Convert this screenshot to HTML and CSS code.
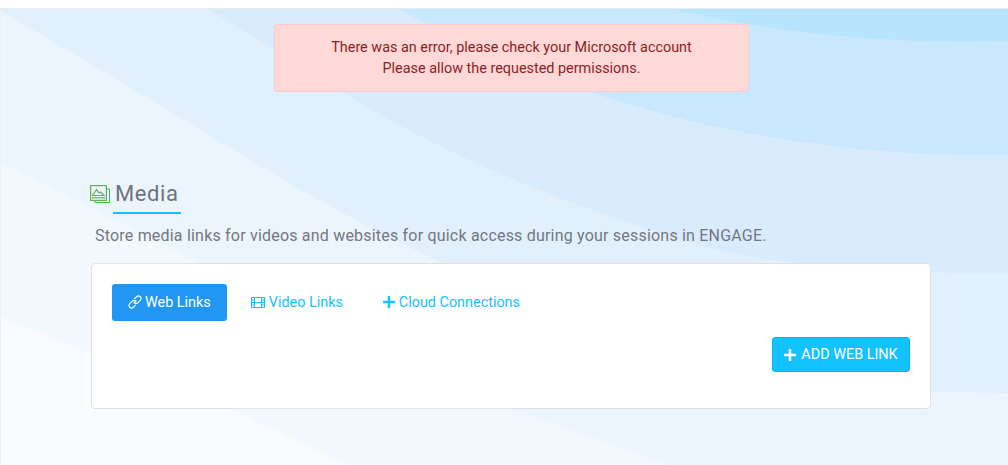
FILE: index.html
```html
<!DOCTYPE html>
<html lang="en">
<head>
<meta charset="utf-8">
<title>Media</title>
<link rel="stylesheet" href="styles.css">
</head>
<body>
<header class="topbar"></header>
<main class="stage">
  <svg class="waves" viewBox="0 9 1008 456" preserveAspectRatio="none" aria-hidden="true">
    <rect y="9" width="1008" height="456" fill="#f8fbff"/>
    <path d="M0 317L90 353L227 408L300 443L350 465H1008V0H0Z" fill="#f3f8ff"/>
    <path d="M0 163L193 260C300 312 420 366 508 408L670 465H1008V0H0Z" fill="#ecf4fe"/>
    <path d="M0 11L100 70L300 190L368 227L435 260C600 340 780 385 932 392L1008 393V0H0Z" fill="#e2f0fe"/>
    <path d="M207 9L273 49L338 90C430 148 560 205 706 247C790 268 900 274 1008 273V0H207Z" fill="#d9ecfd"/>
    <path d="M397 9L425 23C480 55 530 72 584 90C700 130 850 158 1008 155V0H397Z" fill="#c9e8fe"/>
    <path d="M673 9C740 25 860 46 1008 41V0H673Z" fill="#b7e5fe"/>
  </svg>
  <div class="content">
    <div class="alert">
      <p>There was an error, please check your Microsoft account</p>
      <p>Please allow the requested permissions.</p>
    </div>
    <section class="media">
      <div class="heading">
        <svg class="media-icon" viewBox="0 0 20 18" aria-hidden="true">
          <path d="M5 15.5V17.5H19.5V4H17" fill="none" stroke="#45bb4a" stroke-width="1"/>
          <rect x="0.6" y="0.6" width="15.8" height="14.8" fill="none" stroke="#6cb04c" stroke-width="1.2"/>
          <path d="M2.5 10.5L6.5 4.5L9 8L10.5 7L14 10.5Z" fill="none" stroke="#6cb04c" stroke-width="1.2"/>
          <path d="M2 12.8H15" stroke="#6cb04c" stroke-width="1.2"/>
        </svg>
        <h1 class="title">Media</h1>
      </div>
      <p class="lead">Store media links for videos and websites for quick access during your sessions in ENGAGE.</p>
      <div class="card">
        <nav class="tabs">
          <a class="tab tab-active">
            <svg class="tab-icon" viewBox="0 0 16 16" aria-hidden="true">
              <path d="M6.4 9.6L9.6 6.4M7.2 4.6L9.8 2C11 .9 12.9.9 14 2S15.1 5 14 6.2L11.4 8.8C10.3 9.9 8.6 9.9 7.5 8.9M8.8 11.4L6.2 14C5 15.1 3.1 15.1 2 14S.9 11 2 9.8L4.6 7.2C5.7 6.1 7.4 6.1 8.5 7.1" fill="none" stroke="currentColor" stroke-width="1.25"/>
            </svg>
            Web Links
          </a>
          <a class="tab">
            <svg class="tab-icon film" viewBox="0 0 14 11" aria-hidden="true">
              <rect x="0.5" y="0.5" width="13" height="10" fill="none" stroke="currentColor"/>
              <path d="M3.5 0V11M10.5 0V11M3.5 5.5H10.5M0 3H3.5M0 5.5H3.5M0 8H3.5M10.5 3H14M10.5 5.5H14M10.5 8H14" fill="none" stroke="currentColor"/>
            </svg>
            Video Links
          </a>
          <a class="tab">
            <svg class="tab-icon plus" viewBox="0 0 12 12" aria-hidden="true"><path d="M6 0V12M0 6H12" stroke="currentColor" stroke-width="2.5"/></svg>
            Cloud Connections
          </a>
        </nav>
        <div class="actions">
          <button class="add" type="button">
            <svg class="add-icon" viewBox="0 0 12 12" aria-hidden="true"><path d="M6 0V12M0 6H12" stroke="currentColor" stroke-width="2.5"/></svg>
            ADD WEB LINK
          </button>
        </div>
      </div>
    </section>
  </div>
</main>
</body>
</html>
```

FILE: styles.css
```css
* { box-sizing: border-box; }
html, body { margin: 0; height: 100%; }
body {
  font-family: Roboto, "Liberation Sans", sans-serif;
  background: #fff;
  overflow: hidden;
}
.topbar {
  height: 9px;
  background: #fff;
  border-bottom: 1px solid #e9ecef;
}
.stage {
  position: relative;
  height: 456px;
  border-left: 1px solid #eef0f3;
}
.waves {
  position: absolute;
  inset: 0;
  width: 100%;
  height: 100%;
}
.content {
  position: relative;
  padding: 15px 77px 0 90px;
}
.alert {
  width: 475px;
  height: 68px;
  margin-left: 183px;
  padding-top: 12px;
  background: #ffd8d8;
  border: 1px solid #ffc9c9;
  border-radius: 3px;
  color: #8a1f1f;
  font-size: 14.4px;
  line-height: 21px;
  text-align: center;
}
.alert p { margin: 0; }
.media { margin-top: 89px; }
.heading {
  display: flex;
  align-items: flex-start;
  height: 33px;
}
.media-icon {
  width: 20px;
  height: 18px;
  margin: 4px 5px 0 -1px;
  flex: none;
}
.title {
  margin: 0 0 0 -2px;
  width: 68px;
  padding: 0 0 3px 2px;
  height: 33px;
  border-bottom: 2px solid #13c2ff;
  color: #6c757d;
  font-size: 22px;
  font-weight: 400;
  letter-spacing: .6px;
  line-height: 26px;
}
.lead {
  margin: 12px 0 0 4px;
  color: #74787e;
  font-size: 16px;
  line-height: 19px;
  letter-spacing: .2px;
}
.card {
  margin-top: 18px;
  height: 146px;
  padding: 20px;
  background: #fff;
  border: 1px solid #dee2e6;
  border-radius: 4px;
}
.tabs {
  display: flex;
  gap: 8px;
}
.tab {
  display: flex;
  align-items: center;
  gap: 3px;
  height: 37px;
  padding: 0 16px 1px;
  border-radius: 3px;
  color: #13c2ff;
  font-size: 14.4px;
}
.tab-active {
  background: #2196f3;
  color: #fff;
}
.tab-icon { width: 14px; height: 14px; flex: none; }
.film { height: 11px; margin-right: 1px; }
.plus { width: 12px; height: 12px; margin-right: 1px; }
.actions {
  display: flex;
  justify-content: flex-end;
  margin-top: 16px;
}
.add {
  display: flex;
  align-items: center;
  justify-content: center;
  gap: 5px;
  width: 138px;
  height: 35px;
  padding: 0;
  background: #13c2ff;
  border: 1px solid #10b5ee;
  border-radius: 3px;
  color: #fff;
  font-family: inherit;
  font-size: 14.4px;
}
.add-icon { width: 12px; height: 12px; flex: none; }
```
